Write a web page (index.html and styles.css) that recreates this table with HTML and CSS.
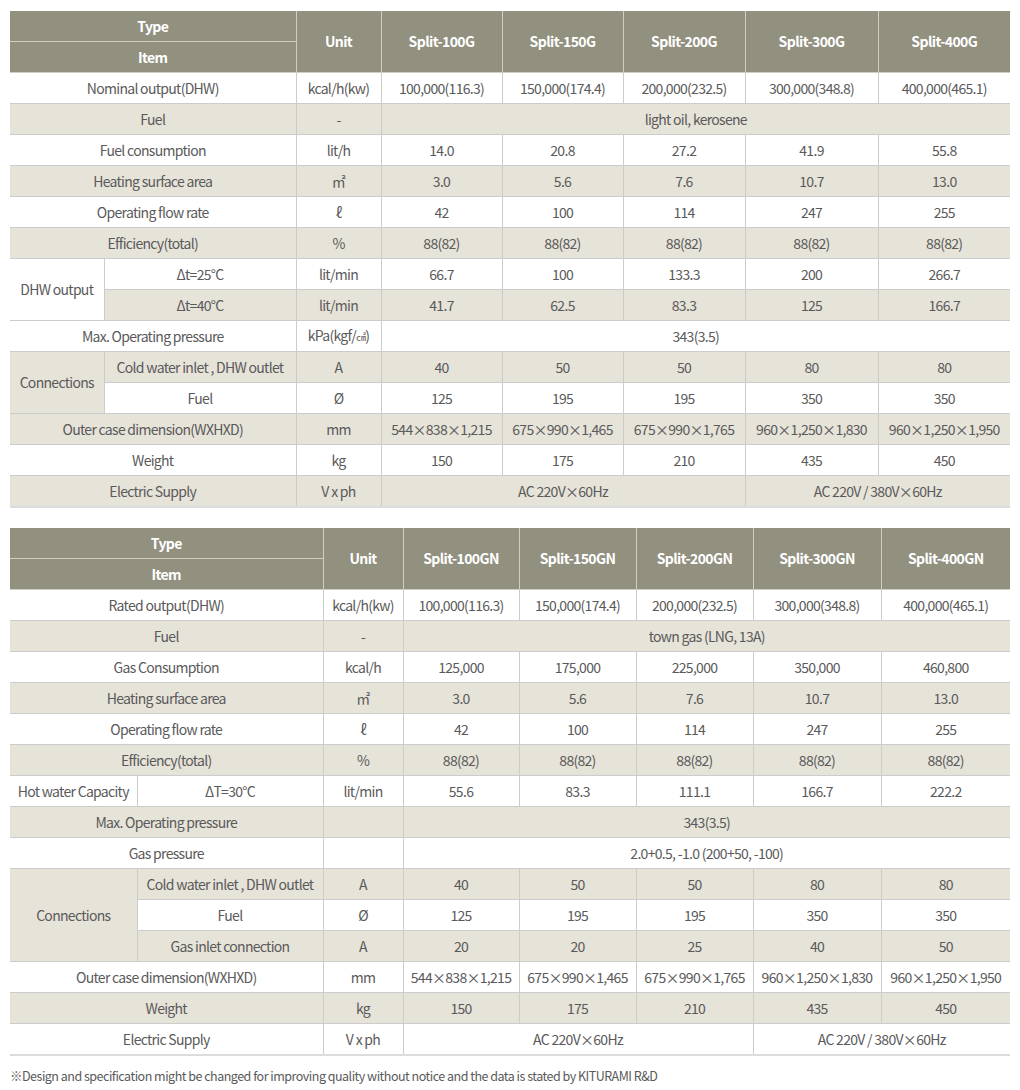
FILE: index.html
```html
<!DOCTYPE html>
<html lang="en">
<head>
<meta charset="utf-8">
<title>Split specifications</title>
<link rel="stylesheet" href="styles.css">
</head>
<body>
<div class="page">
  <table class="spec">
    <colgroup>
      <col class="c-a1"><col class="c-a2"><col class="c-unit1">
      <col class="c-m1"><col class="c-m1"><col class="c-m2"><col class="c-m3"><col class="c-m4">
    </colgroup>
    <thead>
      <tr><th colspan="2">Type</th><th rowspan="2">Unit</th><th rowspan="2">Split-100G</th><th rowspan="2">Split-150G</th><th rowspan="2">Split-200G</th><th rowspan="2">Split-300G</th><th rowspan="2">Split-400G</th></tr>
      <tr><th colspan="2">Item</th></tr>
    </thead>
    <tbody>
      <tr><td colspan="2">Nominal output(DHW)</td><td>kcal/h(kw)</td><td>100,000(116.3)</td><td>150,000(174.4)</td><td>200,000(232.5)</td><td>300,000(348.8)</td><td>400,000(465.1)</td></tr>
      <tr class="alt"><td colspan="2">Fuel</td><td>-</td><td colspan="5">light oil, kerosene</td></tr>
      <tr><td colspan="2">Fuel consumption</td><td>lit/h</td><td>14.0</td><td>20.8</td><td>27.2</td><td>41.9</td><td>55.8</td></tr>
      <tr class="alt"><td colspan="2">Heating surface area</td><td>㎡</td><td>3.0</td><td>5.6</td><td>7.6</td><td>10.7</td><td>13.0</td></tr>
      <tr><td colspan="2">Operating flow rate</td><td>ℓ</td><td>42</td><td>100</td><td>114</td><td>247</td><td>255</td></tr>
      <tr class="alt"><td colspan="2">Efficiency(total)</td><td>%</td><td>88(82)</td><td>88(82)</td><td>88(82)</td><td>88(82)</td><td>88(82)</td></tr>
      <tr><td rowspan="2">DHW output</td><td>Δt=25°C</td><td>lit/min</td><td>66.7</td><td>100</td><td>133.3</td><td>200</td><td>266.7</td></tr>
      <tr class="alt"><td>Δt=40°C</td><td>lit/min</td><td>41.7</td><td>62.5</td><td>83.3</td><td>125</td><td>166.7</td></tr>
      <tr><td colspan="2">Max. Operating pressure</td><td>kPa(kgf/<span class="small">㎠</span>)</td><td colspan="5">343(3.5)</td></tr>
      <tr class="alt"><td rowspan="2">Connections</td><td>Cold water inlet , DHW outlet</td><td>A</td><td>40</td><td>50</td><td>50</td><td>80</td><td>80</td></tr>
      <tr><td>Fuel</td><td>Ø</td><td>125</td><td>195</td><td>195</td><td>350</td><td>350</td></tr>
      <tr class="alt"><td colspan="2">Outer case dimension(WXHXD)</td><td>mm</td><td>544×838×1,215</td><td>675×990×1,465</td><td>675×990×1,765</td><td>960×1,250×1,830</td><td>960×1,250×1,950</td></tr>
      <tr><td colspan="2">Weight</td><td>kg</td><td>150</td><td>175</td><td>210</td><td>435</td><td>450</td></tr>
      <tr class="alt"><td colspan="2">Electric Supply</td><td>V x ph</td><td colspan="3">AC 220V×60Hz</td><td colspan="2">AC 220V / 380V×60Hz</td></tr>
    </tbody>
  </table>

  <table class="spec">
    <colgroup>
      <col class="c-b1"><col class="c-b2"><col class="c-unit2">
      <col class="c-n1"><col class="c-n2"><col class="c-n2"><col class="c-n3"><col class="c-n4">
    </colgroup>
    <thead>
      <tr><th colspan="2">Type</th><th rowspan="2">Unit</th><th rowspan="2">Split-100GN</th><th rowspan="2">Split-150GN</th><th rowspan="2">Split-200GN</th><th rowspan="2">Split-300GN</th><th rowspan="2">Split-400GN</th></tr>
      <tr><th colspan="2">Item</th></tr>
    </thead>
    <tbody>
      <tr><td colspan="2">Rated output(DHW)</td><td>kcal/h(kw)</td><td>100,000(116.3)</td><td>150,000(174.4)</td><td>200,000(232.5)</td><td>300,000(348.8)</td><td>400,000(465.1)</td></tr>
      <tr class="alt"><td colspan="2">Fuel</td><td>-</td><td colspan="5">town gas (LNG, 13A)</td></tr>
      <tr><td colspan="2">Gas Consumption</td><td>kcal/h</td><td>125,000</td><td>175,000</td><td>225,000</td><td>350,000</td><td>460,800</td></tr>
      <tr class="alt"><td colspan="2">Heating surface area</td><td>㎡</td><td>3.0</td><td>5.6</td><td>7.6</td><td>10.7</td><td>13.0</td></tr>
      <tr><td colspan="2">Operating flow rate</td><td>ℓ</td><td>42</td><td>100</td><td>114</td><td>247</td><td>255</td></tr>
      <tr class="alt"><td colspan="2">Efficiency(total)</td><td>%</td><td>88(82)</td><td>88(82)</td><td>88(82)</td><td>88(82)</td><td>88(82)</td></tr>
      <tr><td>Hot water Capacity</td><td>ΔT=30°C</td><td>lit/min</td><td>55.6</td><td>83.3</td><td>111.1</td><td>166.7</td><td>222.2</td></tr>
      <tr class="alt"><td colspan="2">Max. Operating pressure</td><td></td><td colspan="5">343(3.5)</td></tr>
      <tr><td colspan="2">Gas pressure</td><td></td><td colspan="5">2.0+0.5, -1.0 (200+50, -100)</td></tr>
      <tr class="alt"><td rowspan="3">Connections</td><td>Cold water inlet , DHW outlet</td><td>A</td><td>40</td><td>50</td><td>50</td><td>80</td><td>80</td></tr>
      <tr><td>Fuel</td><td>Ø</td><td>125</td><td>195</td><td>195</td><td>350</td><td>350</td></tr>
      <tr class="alt"><td>Gas inlet connection</td><td>A</td><td>20</td><td>20</td><td>25</td><td>40</td><td>50</td></tr>
      <tr><td colspan="2">Outer case dimension(WXHXD)</td><td>mm</td><td>544×838×1,215</td><td>675×990×1,465</td><td>675×990×1,765</td><td>960×1,250×1,830</td><td>960×1,250×1,950</td></tr>
      <tr class="alt"><td colspan="2">Weight</td><td>kg</td><td>150</td><td>175</td><td>210</td><td>435</td><td>450</td></tr>
      <tr><td colspan="2">Electric Supply</td><td>V x ph</td><td colspan="3">AC 220V×60Hz</td><td colspan="2">AC 220V / 380V×60Hz</td></tr>
    </tbody>
  </table>

  <p class="note">※Design and specification might be changed for improving quality without notice and the data is stated by KITURAMI R&amp;D</p>
</div>
</body>
</html>
```

FILE: styles.css
```css
html, body {
  margin: 0;
  padding: 0;
  background: #ffffff;
}

.page {
  padding: 11px 10px 0 10px;
  font-family: "Noto Sans CJK KR", "Noto Sans", sans-serif;
  color: #5a5a5a;
}

.spec {
  width: 1000px;
  table-layout: fixed;
  border-collapse: collapse;
  font-size: 14px;
  letter-spacing: -0.7px;
  border-bottom: 2px solid #dcdcdc;
}

.spec + .spec {
  margin-top: 20px;
}

.c-a1 { width: 94px; }
.c-a2 { width: 192px; }
.c-unit1 { width: 85px; }
.c-m1 { width: 121px; }
.c-m2 { width: 122px; }
.c-m3 { width: 133px; }
.c-m4 { width: 132px; }

.c-b1 { width: 127px; }
.c-b2 { width: 186px; }
.c-unit2 { width: 80px; }
.c-n1 { width: 116px; }
.c-n2 { width: 117px; }
.c-n3 { width: 128px; }
.c-n4 { width: 129px; }

.spec th {
  background: #92907f;
  color: #ffffff;
  font-weight: 700;
  height: 29px;
  padding: 0 0 1px 0;
  text-align: center;
  vertical-align: middle;
  border: 1px solid #cfcdc4;
  letter-spacing: -0.6px;
  line-height: 18px;
}

.spec td {
  height: 29px;
  padding: 0 0 1px 0;
  text-align: center;
  vertical-align: middle;
  border: 1px solid #cccccc;
  white-space: nowrap;
  line-height: 18px;
}

.spec tr > :first-child { border-left: none; }
.spec tr > :last-child { border-right: none; }
.spec thead tr:first-child th { border-top: none; }
.spec thead tr:nth-child(2) th { border-left: none; }

.spec tr.alt td {
  background: #e6e3d9;
}

.small {
  font-size: 10px;
}

.note {
  margin: 10px 0 0 0;
  font-size: 12.5px;
  letter-spacing: -0.5px;
  color: #5a5a5a;
}
```
